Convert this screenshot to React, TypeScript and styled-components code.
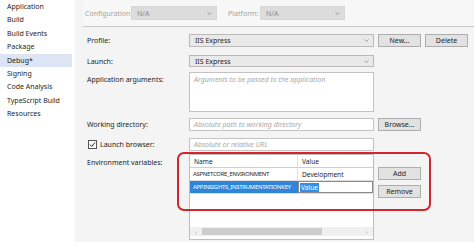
import React from 'react';
import styled, { createGlobalStyle } from 'styled-components';

const GlobalStyle = createGlobalStyle`
  html, body {
    margin: 0;
    padding: 0;
    background: #f4f4f4;
  }
  body {
    font-family: "Noto Sans", "Open Sans", sans-serif;
    font-size: 7px;
    color: #1e1e1e;
  }
`;

const sections = [
  'Application',
  'Build',
  'Build Events',
  'Package',
  'Debug*',
  'Signing',
  'Code Analysis',
  'TypeScript Build',
  'Resources',
];

const Page = styled.div`
  width: 474px;
  height: 242px;
  display: flex;
  overflow: hidden;
`;

const Sidebar = styled.ul`
  width: 75px;
  flex: none;
  margin: 0;
  padding: 0;
  list-style: none;
  background: #ffffff;
`;

const SideItem = styled.li<{ $active?: boolean }>`
  height: 13.4px;
  width: 72px;
  line-height: 13.4px;
  padding-left: 7px;
  box-sizing: border-box;
  white-space: nowrap;
  background: ${(p) => (p.$active ? '#dde4f4' : 'transparent')};
`;

const Main = styled.div`
  flex: 1;
  display: flex;
  flex-direction: column;
  background: #f4f4f4;
`;

const TopBar = styled.div`
  height: 26px;
  margin-left: 8px;
  display: flex;
  align-items: center;
  border-bottom: 1px solid #c9c9c9;
  background: #f7f7f7;
`;

const DimLabel = styled.span<{ $w: number; $pl: number }>`
  width: ${(p) => p.$w}px;
  padding-left: ${(p) => p.$pl}px;
  box-sizing: border-box;
  color: #a3a3a3;
  white-space: nowrap;
`;

const Select = styled.div<{ $w?: number; $disabled?: boolean }>`
  width: ${(p) => (p.$w ? `${p.$w}px` : '100%')};
  height: 100%;
  box-sizing: border-box;
  display: flex;
  align-items: center;
  justify-content: space-between;
  padding: 0 4px 0 5px;
  border: 1px solid ${(p) => (p.$disabled ? '#d6d6d6' : '#bababa')};
  background: ${(p) => (p.$disabled ? '#dcdcdc' : '#e9e9e9')};
  color: ${(p) => (p.$disabled ? '#8c8c8c' : '#1e1e1e')};
`;

const TopSelect = styled(Select)`
  height: 14px;
`;

const Chevron = styled.svg`
  width: 5px;
  height: 3px;
  flex: none;
`;

const Form = styled.div`
  padding: 7px 0 0 12px;
  display: flex;
  flex-direction: column;
`;

const Row = styled.div<{ $mt: number; $h: number }>`
  position: relative;
  margin-top: ${(p) => p.$mt}px;
  height: ${(p) => p.$h}px;
  display: grid;
  grid-template-columns: 98px 185px 43px 43px;
  column-gap: 4px;
`;

const Label = styled.div<{ $top?: number }>`
  display: flex;
  align-items: ${(p) => (p.$top !== undefined ? 'flex-start' : 'center')};
  padding-top: ${(p) => p.$top ?? 0}px;
  white-space: nowrap;
  gap: 3px;
`;

const Box = styled.div`
  width: 9px;
  height: 9px;
  box-sizing: border-box;
  border: 1px solid #555;
  background: #fff;
  display: flex;
  align-items: center;
  justify-content: center;
  margin-left: 1px;
`;

const TextInput = styled.div`
  box-sizing: border-box;
  height: 100%;
  border: 1px solid #c3c3c3;
  background: #ffffff;
  padding: 1px 4px;
  display: flex;
  align-items: center;
`;

const TextArea = styled(TextInput)`
  align-items: flex-start;
  padding-top: 2px;
`;

const Placeholder = styled.span`
  color: #a8a8a8;
  font-style: italic;
  white-space: nowrap;
`;

const Button = styled.div`
  box-sizing: border-box;
  height: 13px;
  border: 1px solid #adadad;
  background: #e2e2e2;
  display: flex;
  align-items: center;
  justify-content: center;
  white-space: nowrap;
`;

const ButtonStack = styled.div`
  display: flex;
  flex-direction: column;
  gap: 5px;
  padding-top: 13px;
`;

const EnvGrid = styled.div`
  box-sizing: border-box;
  height: 86px;
  border: 1px solid #bdbdbd;
  background: #ffffff;
  display: flex;
  flex-direction: column;
`;

const GridRow = styled.div<{ $header?: boolean }>`
  height: 13px;
  flex: none;
  display: grid;
  grid-template-columns: 108px 1fr;
  border-bottom: 1px solid ${(p) => (p.$header ? '#cfcfcf' : '#dedede')};
  box-sizing: border-box;
`;

const Cell = styled.div<{ $selected?: boolean; $divider?: boolean; $caps?: boolean }>`
  display: flex;
  align-items: center;
  padding-left: ${(p) => (p.$caps ? 3 : 4)}px;
  white-space: nowrap;
  overflow: hidden;
  background: ${(p) => (p.$selected ? '#2f86d9' : 'transparent')};
  color: ${(p) => (p.$selected ? '#ffffff' : '#1e1e1e')};
  border-right: ${(p) => (p.$divider ? '1px solid #e2e2e2' : 'none')};
  font-size: ${(p) => (p.$caps ? 5.9 : 6.6)}px;
  letter-spacing: ${(p) => (p.$caps ? -0.25 : 0)}px;
`;

const EditCell = styled.div`
  display: flex;
  align-items: center;
  padding-left: 1px;
  border: 1px solid #8a8a8a;
`;

const Highlight = styled.span`
  background: #3390e4;
  color: #ffffff;
  padding: 0 1px;
  font-size: 6.6px;
`;

const Filler = styled.div`
  flex: 1;
`;

const ScrollBar = styled.div`
  height: 9px;
  margin-bottom: 3px;
  display: flex;
  align-items: center;
  background: #f0f0f0;
  color: #9a9a9a;
  font-size: 6px;
`;

const Arrow = styled.span`
  width: 12px;
  text-align: center;
  flex: none;
`;

const Thumb = styled.div`
  width: 120px;
  height: 7px;
  background: #cdcdcd;
`;

const Callout = styled.div`
  position: absolute;
  left: 90px;
  top: -2px;
  width: 254px;
  height: 59px;
  box-sizing: border-box;
  border: 2px solid #d3262b;
  border-radius: 7px;
  pointer-events: none;
`;

const ChevronIcon = () => (
  <Chevron viewBox="0 0 5 3">
    <path d="M0.5 0.5 L2.5 2.5 L4.5 0.5" fill="none" stroke="#8a8a8a" strokeWidth="0.8" />
  </Chevron>
);

export default function App() {
  return (
    <>
      <GlobalStyle />
      <Page>
        <Sidebar>
          {sections.map((s) => (
            <SideItem key={s} $active={s === 'Debug*'}>
              {s}
            </SideItem>
          ))}
        </Sidebar>
        <Main>
          <TopBar>
            <DimLabel $w={48} $pl={2}>Configuration:</DimLabel>
            <TopSelect $w={86} $disabled>
              N/A
              <ChevronIcon />
            </TopSelect>
            <DimLabel $w={43} $pl={11}>Platform:</DimLabel>
            <TopSelect $w={85} $disabled>
              N/A
              <ChevronIcon />
            </TopSelect>
          </TopBar>
          <Form>
            <Row $mt={0} $h={13}>
              <Label>Profile:</Label>
              <Select>
                IIS Express
                <ChevronIcon />
              </Select>
              <Button>New...</Button>
              <Button>Delete</Button>
            </Row>
            <Row $mt={8} $h={12}>
              <Label>Launch:</Label>
              <Select>
                IIS Express
                <ChevronIcon />
              </Select>
            </Row>
            <Row $mt={5} $h={40}>
              <Label $top={3}>Application arguments:</Label>
              <TextArea>
                <Placeholder>Arguments to be passed to the application</Placeholder>
              </TextArea>
            </Row>
            <Row $mt={6} $h={13}>
              <Label>Working directory:</Label>
              <TextInput>
                <Placeholder>Absolute path to working directory</Placeholder>
              </TextInput>
              <Button>Browse...</Button>
            </Row>
            <Row $mt={7} $h={12}>
              <Label>
                <Box>
                  <svg width="7" height="7" viewBox="0 0 7 7">
                    <path d="M1 3.6 L2.8 5.4 L6 1.4" fill="none" stroke="#222" strokeWidth="1" />
                  </svg>
                </Box>
                Launch browser:
              </Label>
              <TextInput>
                <Placeholder>Absolute or relative URL</Placeholder>
              </TextInput>
            </Row>
            <Row $mt={4} $h={86}>
              <Label $top={4}>Environment variables:</Label>
              <EnvGrid>
                <GridRow $header>
                  <Cell $divider>Name</Cell>
                  <Cell>Value</Cell>
                </GridRow>
                <GridRow>
                  <Cell $divider $caps>ASPNETCORE_ENVIRONMENT</Cell>
                  <Cell>Development</Cell>
                </GridRow>
                <GridRow>
                  <Cell $selected $caps>APPINSIGHTS_INSTRUMENTATIONKEY</Cell>
                  <EditCell>
                    <Highlight>Value</Highlight>
                  </EditCell>
                </GridRow>
                <Filler />
                <ScrollBar>
                  <Arrow>‹</Arrow>
                  <Thumb />
                  <Filler />
                  <Arrow>›</Arrow>
                </ScrollBar>
              </EnvGrid>
              <ButtonStack>
                <Button>Add</Button>
                <Button>Remove</Button>
              </ButtonStack>
              <Callout />
            </Row>
          </Form>
        </Main>
      </Page>
    </>
  );
}
